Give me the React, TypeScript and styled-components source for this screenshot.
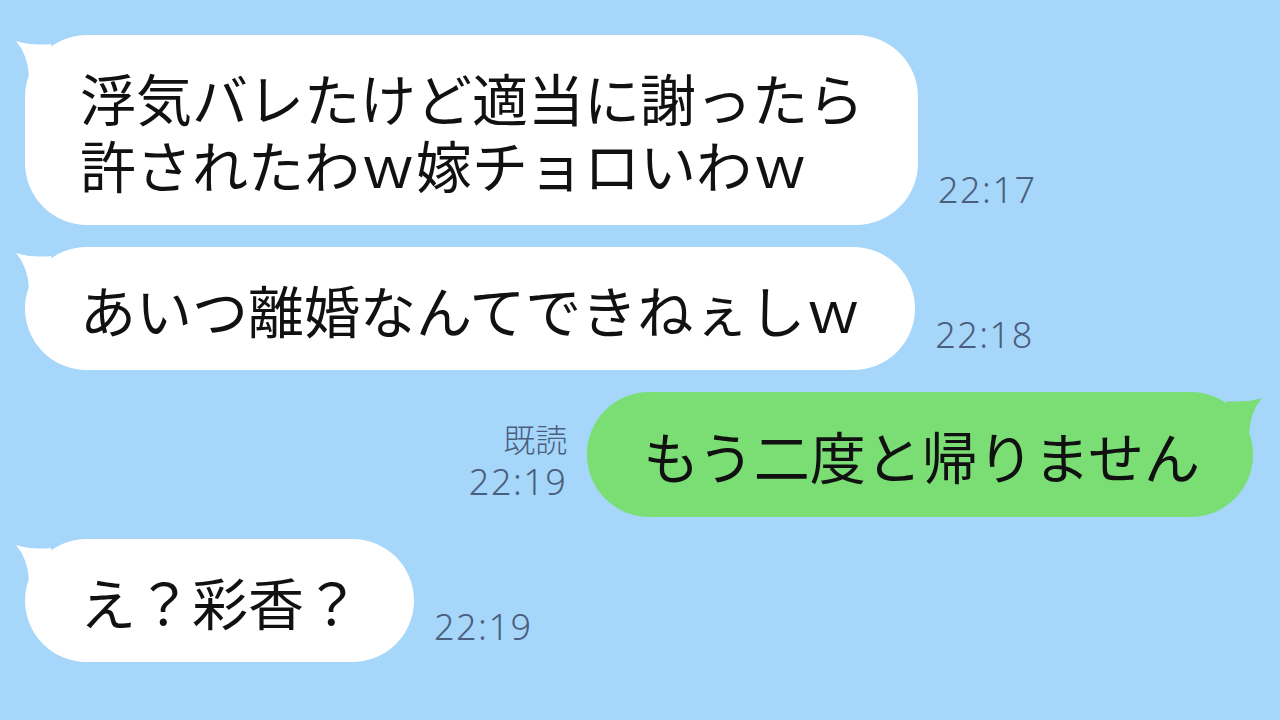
import styled, { createGlobalStyle } from "styled-components";

const GlobalStyle = createGlobalStyle`
  html, body {
    margin: 0;
    padding: 0;
    background: #a6d6fa;
  }
  body {
    font-family: "Noto Sans CJK JP", "Noto Sans", sans-serif;
  }
`;

const Screen = styled.div`
  width: 1280px;
  height: 720px;
  box-sizing: border-box;
  padding: 35px 27px 0 25px;
  background: #a6d6fa;
  display: flex;
  flex-direction: column;
  gap: 22px;
  overflow: hidden;
`;

const Row = styled.div<{ $mine?: boolean }>`
  display: flex;
  align-items: flex-end;
  justify-content: ${(p) => (p.$mine ? "flex-end" : "flex-start")};
  gap: 20px;
`;

const Bubble = styled.div<{ $mine?: boolean }>`
  position: relative;
  background: ${(p) => (p.$mine ? "#7ade74" : "#ffffff")};
  color: #111;
  border-radius: 62px;
  padding: ${(p) => (p.$mine ? "29px 53px 29px 56px" : "28px 54px 28px 55px")};
  font-size: 56px;
  line-height: 67px;
  white-space: nowrap;
`;

const Tail = styled.svg<{ $mine?: boolean }>`
  position: absolute;
  top: 0;
  width: 60px;
  height: 60px;
  ${(p) => (p.$mine ? "right: -12px; transform: scaleX(-1);" : "left: -12px;")}
`;

const Meta = styled.div<{ $mine?: boolean }>`
  display: flex;
  flex-direction: column;
  align-items: ${(p) => (p.$mine ? "flex-end" : "flex-start")};
  margin-bottom: 14px;
  color: #4a5f7e;
  font-family: "Noto Sans", "Open Sans", sans-serif;
  font-weight: 300;
  font-size: 36px;
  letter-spacing: 1.5px;
  line-height: 42px;
`;

const Read = styled.span`
  font-family: "Noto Sans CJK JP", sans-serif;
  font-size: 32px;
  letter-spacing: 0;
  line-height: 46px;
`;

type Msg = {
  lines: string[];
  time: string;
  mine?: boolean;
  read?: boolean;
};

const messages: Msg[] = [
  { lines: ["浮気バレたけど適当に謝ったら", "許されたわｗ嫁チョロいわｗ"], time: "22:17" },
  { lines: ["あいつ離婚なんてできねぇしｗ"], time: "22:18" },
  { lines: ["もう二度と帰りません"], time: "22:19", mine: true, read: true },
  { lines: ["え？彩香？"], time: "22:19" },
];

const BubbleTail = ({ mine }: { mine?: boolean }) => (
  <Tail $mine={mine} viewBox="0 0 60 60">
    <path
      d="M3,6 Q18,11 38,9 L44,44 L16,42 Q15,20 3,6 Z"
      fill={mine ? "#7ade74" : "#ffffff"}
    />
  </Tail>
);

const App = () => {
  return (
    <>
      <GlobalStyle />
      <Screen>
        {messages.map((m, i) => {
          const meta = (
            <Meta $mine={m.mine}>
              {m.read && <Read>既読</Read>}
              <span>{m.time}</span>
            </Meta>
          );
          return (
            <Row key={i} $mine={m.mine}>
              {m.mine && meta}
              <Bubble $mine={m.mine}>
                <BubbleTail mine={m.mine} />
                {m.lines.map((l, j) => (
                  <div key={j}>{l}</div>
                ))}
              </Bubble>
              {!m.mine && meta}
            </Row>
          );
        })}
      </Screen>
    </>
  );
};

export default App;
